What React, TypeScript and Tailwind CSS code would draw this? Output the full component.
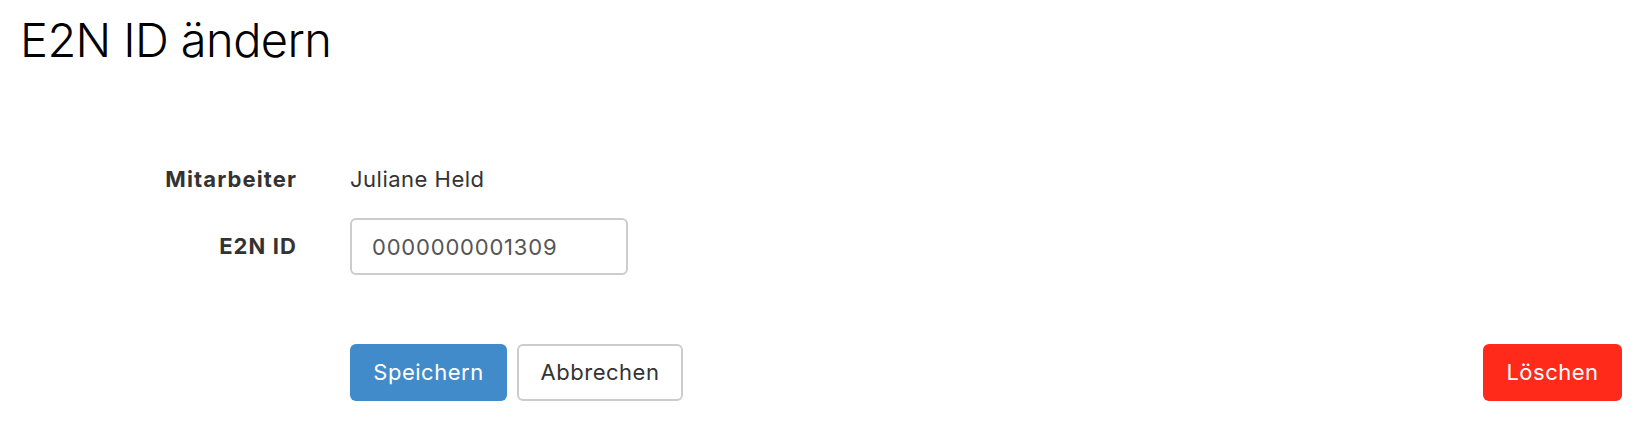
export default function App() {
  return (
    <div className="w-[1640px] h-[422px] bg-white px-5 text-[#333] font-['Inter',sans-serif]">
      <h1 className="pt-[14px] text-[47px] font-light leading-[52px] text-black tracking-[-0.6px]">E2N ID ändern</h1>

      <div className="mt-[98px] grid grid-cols-[277px_1fr] gap-x-[53px] text-[22px] tracking-[0.5px]">
        <label className="text-right font-bold leading-[30px] tracking-[1.1px]">Mitarbeiter</label>
        <div className="leading-[30px]">Juliane Held</div>

        <label className="mt-[24px] flex h-[57px] items-center justify-end font-bold tracking-[1.1px]">E2N ID</label>
        <div className="mt-[24px]">
          <input
            type="text"
            defaultValue="0000000001309"
            className="h-[57px] w-[278px] rounded-[6px] border-2 border-[#ccc] px-[20px] text-[22px] tracking-[0.8px] text-[#555] outline-none"
          />
        </div>
      </div>

      <div className="mt-[69px] flex items-center text-[22px] tracking-[0.5px]">
        <div className="ml-[330px] flex gap-[10px]">
          <button className="h-[57px] w-[157px] rounded-[6px] bg-[#428bca] text-white">Speichern</button>
          <button className="h-[57px] w-[166px] rounded-[6px] border-2 border-[#ccc] bg-white text-[#333]">Abbrechen</button>
        </div>
        <button className="ml-auto mr-[-2px] h-[57px] w-[139px] rounded-[6px] bg-[#ff2a1a] text-white">Löschen</button>
      </div>
    </div>
  )
}
